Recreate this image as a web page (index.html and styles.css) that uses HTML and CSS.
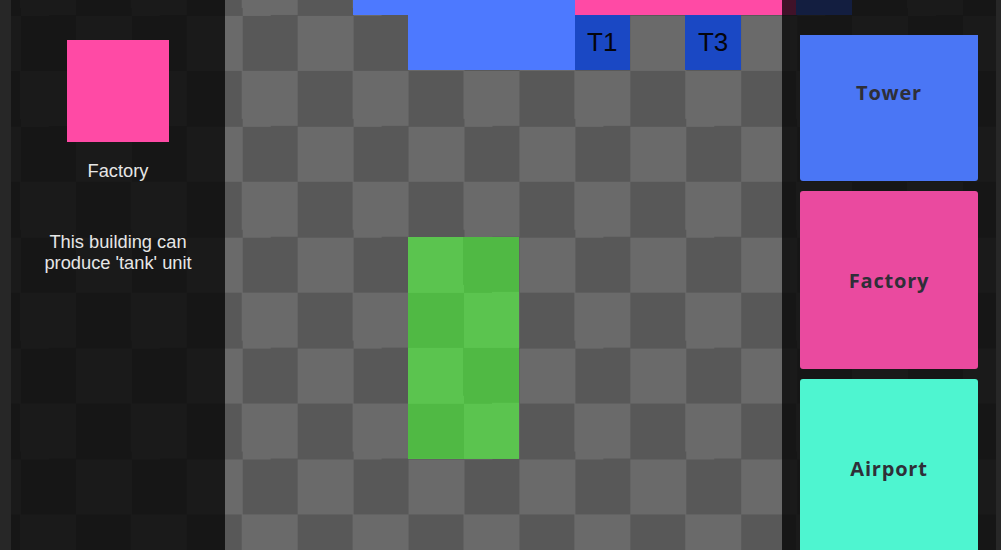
FILE: index.html
```html
<!DOCTYPE html>
<html lang="en">
<head>
<meta charset="UTF-8">
<meta name="viewport" content="width=device-width, initial-scale=1.0">
<link rel="stylesheet" href="styles.css">
<title>Base Builder</title>
</head>
<body>
<div class="screen">
  <!-- map grid, every building sits on whole cells -->
  <div class="board">
    <div class="plot tower" style="grid-column: 8 / 12; grid-row: 1;"></div>
    <div class="plot tower" style="grid-column: 9 / 12; grid-row: 2;"></div>
    <div class="plot factory" style="grid-column: 12 / 16; grid-row: 1;"></div>
    <div class="plot tower" style="grid-column: 16 / 17; grid-row: 1;"></div>
    <div class="plot unit" style="grid-column: 12; grid-row: 2;">T1</div>
    <div class="plot unit" style="grid-column: 14; grid-row: 2;">T3</div>
    <div class="plot field" style="grid-column: 9 / 11; grid-row: 6 / 10;"></div>
  </div>

  <div class="hud">
    <div class="edge"></div>
    <aside class="info">
      <div class="info-swatch"></div>
      <p class="info-name">Factory</p>
      <p class="info-desc">This building can<br>produce 'tank' unit</p>
    </aside>
    <div class="gap"></div>
    <aside class="menu">
      <div class="menu-view">
        <div class="menu-list">
          <button class="build-btn btn-tower">Tower</button>
          <button class="build-btn btn-factory">Factory</button>
          <button class="build-btn btn-airport">Airport</button>
        </div>
      </div>
    </aside>
    <div class="edge edge-right"></div>
  </div>
</div>
</body>
</html>
```

FILE: styles.css
```css
body {
  margin: 0;
  background-color: #1b1b1b;
  font-family: "Liberation Sans", Arial, sans-serif;
  overflow: hidden;
}

.screen {
  display: grid;
  grid-template-columns: 1001px;
  grid-template-rows: 550px;
  width: 1001px;
  height: 550px;
  overflow: hidden;
}

.board,
.hud {
  grid-area: 1 / 1;
}

/* checkerboard map, one tile = 2x2 cells */
.board {
  display: grid;
  grid-template-columns: repeat(19, 55.45px);
  grid-template-rows: repeat(11, 55.45px);
  justify-self: start;
  align-self: start;
  margin: -40.4px 0 0 -35.25px;
  background: repeating-conic-gradient(#6a6a6a 0 25%, #585858 0 50%) 0 0 / 110.9px 110.9px;
}

.plot {
  display: flex;
  align-items: center;
  justify-content: center;
}

.tower {
  background-color: #4d79ff;
}

.factory {
  background-color: #ff4aa5;
}

.unit {
  background-color: #1a48c4;
  color: #05050c;
  font-size: 26px;
}

.field {
  background: repeating-conic-gradient(#50b944 0 25%, #5bc44f 0 50%) 0 0 / 110.9px 110.9px;
}

/* overlay panels */
.hud {
  display: flex;
  z-index: 1;
}

.edge {
  width: 11px;
  background-color: #272727;
}

.edge-right {
  width: 5px;
}

.gap {
  flex: 1;
}

.info {
  width: 214px;
  display: flex;
  flex-direction: column;
  align-items: center;
  padding-top: 40px;
  background-color: rgba(0, 0, 0, 0.75);
  color: #e6e6e6;
  font-size: 18.3px;
  line-height: 21px;
  text-align: center;
}

.info-swatch {
  width: 102px;
  height: 102px;
  background-color: #ff4aa5;
}

.info-name {
  margin: 18px 0 0;
}

.info-desc {
  margin: 50px 0 0;
}

.menu {
  width: 214px;
  box-sizing: border-box;
  padding: 35px 18px 0;
  background-color: rgba(0, 0, 0, 0.75);
}

.menu-view {
  height: 100%;
  overflow: hidden;
}

.menu-list {
  display: flex;
  flex-direction: column;
  gap: 10px;
  margin-top: -32px; /* scrolled a little */
}

.build-btn {
  height: 178px;
  border: none;
  border-radius: 3px;
  padding: 0;
  font-family: "Open Sans", sans-serif;
  font-weight: 700;
  font-size: 20px;
  letter-spacing: 0.8px;
  color: #2f2f38;
  cursor: pointer;
}

.btn-tower {
  background-color: #4a76f5;
}

.btn-factory {
  background-color: #ea4a9f;
}

.btn-airport {
  background-color: #4ef5d0;
}
```
